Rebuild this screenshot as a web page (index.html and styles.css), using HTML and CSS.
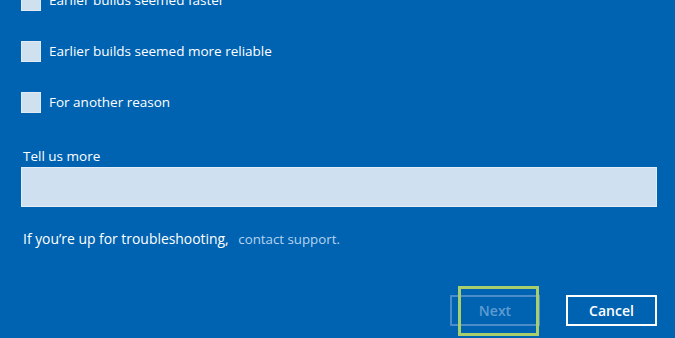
FILE: index.html
```html
<!DOCTYPE html>
<html>
<head>
<meta charset="utf-8">
<link rel="stylesheet" href="styles.css">
</head>
<body>
<div class="page">
  <div class="options">
    <label class="option"><span class="box"></span><span class="label">Earlier builds seemed faster</span></label>
    <label class="option"><span class="box"></span><span class="label">Earlier builds seemed more reliable</span></label>
    <label class="option"><span class="box"></span><span class="label">For another reason</span></label>
  </div>
  <div class="more">
    <div class="more-title">Tell us more</div>
    <div class="input"></div>
  </div>
  <p class="trouble">If you’re up for troubleshooting, <a class="link">contact support.</a></p>
  <div class="actions">
    <div class="btn btn-next">Next<span class="focus"></span></div>
    <div class="btn btn-cancel">Cancel</div>
  </div>
</div>
</body>
</html>
```
FILE: styles.css
```css
html, body {
  margin: 0;
  padding: 0;
  background: #0063b1;
  width: 675px;
  height: 338px;
  overflow: hidden;
}
.page {
  font-family: "Open Sans", "Noto Sans", sans-serif;
  color: #ffffff;
  padding: 0 18px 0 21px;
  margin-top: -10px;
}
.options {
  display: flex;
  flex-direction: column;
  gap: 30px;
}
.option {
  display: flex;
  align-items: center;
  height: 21px;
  gap: 8px;
}
.box {
  width: 20px;
  height: 21px;
  background: #cfe0ef;
  box-sizing: border-box;
  border: 1px solid #dfeaf5;
}
.label {
  font-size: 13.5px;
  line-height: 21px;
}
.more {
  margin-top: 34px;
}
.more-title {
  font-size: 13.5px;
  line-height: 18px;
  padding-left: 2px;
  margin-bottom: 2px;
}
.input {
  height: 40px;
  background: #cfe1f0;
  box-sizing: border-box;
  border: 1px solid #e3eef8;
}
.trouble {
  margin: 23px 0 0 2px;
  font-size: 13.9px;
  line-height: 18px;
}
.link {
  color: #b5d3ef;
  font-size: 13.3px;
  margin-left: 6px;
}
.actions {
  display: flex;
  justify-content: flex-end;
  gap: 26px;
  margin-top: 47px;
}
.btn {
  position: relative;
  box-sizing: border-box;
  height: 31px;
  display: flex;
  align-items: center;
  justify-content: center;
  font-size: 14px;
  font-weight: 600;
}
.btn-next {
  width: 90px;
  border: 2px solid #4a8dc8;
  color: #5d9bd2;
}
.focus {
  position: absolute;
  left: 6px;
  top: -11px;
  width: 81px;
  height: 50px;
  box-sizing: border-box;
  border: 3px solid #a8cf6c;
}
.btn-cancel {
  width: 91px;
  border: 2px solid #ffffff;
  color: #ffffff;
}
```
